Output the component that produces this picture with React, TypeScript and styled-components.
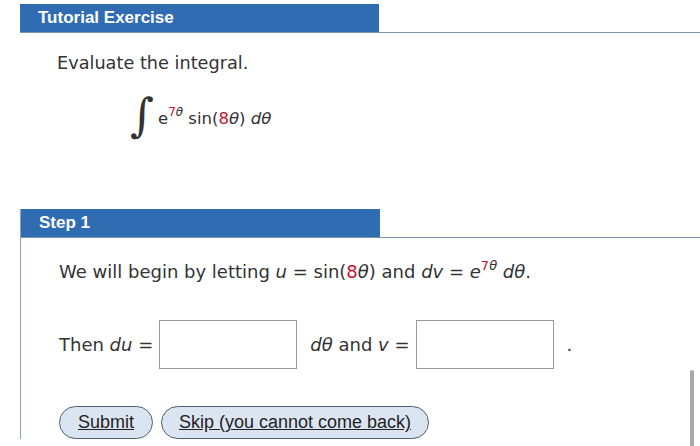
import React from 'react';
import styled, { createGlobalStyle } from 'styled-components';

const GlobalStyle = createGlobalStyle`
  html, body {
    margin: 0;
    padding: 0;
    background: #ffffff;
    overflow: hidden;
  }
  body {
    font-family: "DejaVu Sans", Verdana, sans-serif;
    color: #333333;
  }
`;

const Page = styled.div`
  position: relative;
  width: 700px;
  height: 446px;
  overflow: hidden;
  padding: 4px 0 0 20px;
  box-sizing: border-box;
`;

const Section = styled.section<{ $framed?: boolean; $gap?: number }>`
  border-left: ${({ $framed }) => ($framed ? '1px solid #8aa4ba' : 'none')};
  margin-top: ${({ $gap }) => $gap ?? 0}px;
`;

const HeaderRow = styled.div`
  display: flex;
  border-bottom: 1px solid #7893aa;
`;

const HeaderTab = styled.div`
  width: 359px;
  height: 28px;
  box-sizing: border-box;
  background: #2f6cb1;
  color: #ffffff;
  font-family: "Liberation Sans", Arial, sans-serif;
  font-weight: bold;
  font-size: 17px;
  line-height: 28px;
  padding-left: 18px;
`;

const Body = styled.div<{ $pad: string }>`
  padding: ${({ $pad }) => $pad};
  font-size: 18px;
`;

const Prompt = styled.p`
  margin: 0;
  font-size: 17.7px;
  line-height: 22px;
`;

const IntegralRow = styled.div`
  display: flex;
  align-items: center;
  margin: 18px 0 0 73px;
  height: 46px;
  font-size: 16.5px;
`;

const IntegralSign = styled.span`
  font-family: "DejaVu Serif", serif;
  font-style: italic;
  font-size: 46px;
  line-height: 46px;
  margin-right: 4px;
  color: #333;
`;

const MathText = styled.span`
  padding-top: 6px;
`;

const Red = styled.span`
  color: #c8102e;
`;

const Sup = styled.sup<{ $size?: number }>`
  font-size: ${({ $size }) => $size ?? 12}px;
  vertical-align: 8px;
  line-height: 0;
`;

const Var = styled.i`
  font-style: italic;
`;

const Sentence = styled.p`
  margin: 0;
  font-size: 18px;
  line-height: 22px;
`;

const AnswerRow = styled.div`
  display: flex;
  align-items: center;
  margin-top: 37px;
  font-size: 18px;
`;

const Label = styled.span`
  white-space: pre;
`;

const AnswerBox = styled.input<{ $lead: number }>`
  width: 138px;
  height: 49px;
  box-sizing: border-box;
  border: 1px solid #9a9a9a;
  margin: 0 13px 0 ${({ $lead }) => $lead}px;
  padding: 0 6px;
  font-size: 16px;
  outline: none;
`;

const Buttons = styled.div`
  display: flex;
  gap: 8px;
  margin-top: 37px;
`;

const Pill = styled.button<{ $w: number }>`
  width: ${({ $w }) => $w}px;
  height: 33px;
  border: 1px solid #4d5f73;
  border-radius: 17px;
  background: #dbe5f1;
  color: #222222;
  font-family: "Liberation Sans", Arial, sans-serif;
  font-size: 18px;
  text-decoration: underline;
  padding: 0;
  cursor: pointer;
`;

const Scrollbar = styled.div`
  position: absolute;
  right: 6px;
  top: 370px;
  width: 4px;
  height: 90px;
  border-radius: 2px;
  background: #a9a9a9;
`;

export default function App() {
  return (
    <>
      <GlobalStyle />
      <Page>
        <Section>
          <HeaderRow>
            <HeaderTab>Tutorial Exercise</HeaderTab>
          </HeaderRow>
          <Body $pad="19px 0 0 37px">
            <Prompt>Evaluate the integral.</Prompt>
            <IntegralRow>
              <IntegralSign>∫</IntegralSign>
              <MathText>
                e
                <Sup>
                  <Red>7</Red>
                  <Var>θ</Var>
                </Sup>{' '}
                sin(<Red>8</Red>
                <Var>θ</Var>) <Var>dθ</Var>
              </MathText>
            </IntegralRow>
          </Body>
        </Section>

        <Section $framed $gap={71}>
          <HeaderRow>
            <HeaderTab>Step 1</HeaderTab>
          </HeaderRow>
          <Body $pad="23px 0 0 38px">
            <Sentence>
              We will begin by letting <Var>u</Var> = sin(<Red>8</Red>
              <Var>θ</Var>) and <Var>dv</Var> = <Var>e</Var>
              <Sup $size={13}>
                <Red>7</Red>
                <Var>θ</Var>
              </Sup>{' '}
              <Var>dθ</Var>.
            </Sentence>
            <AnswerRow>
              <Label>
                Then <Var>du</Var> =
              </Label>
              <AnswerBox aria-label="du" $lead={6} />
              <Label>
                <Var>dθ</Var> and <Var>v</Var> =
              </Label>
              <AnswerBox aria-label="v" $lead={6} />
              <Label>.</Label>
            </AnswerRow>
            <Buttons>
              <Pill $w={94}>Submit</Pill>
              <Pill $w={268}>Skip (you cannot come back)</Pill>
            </Buttons>
          </Body>
        </Section>
        <Scrollbar />
      </Page>
    </>
  );
}
